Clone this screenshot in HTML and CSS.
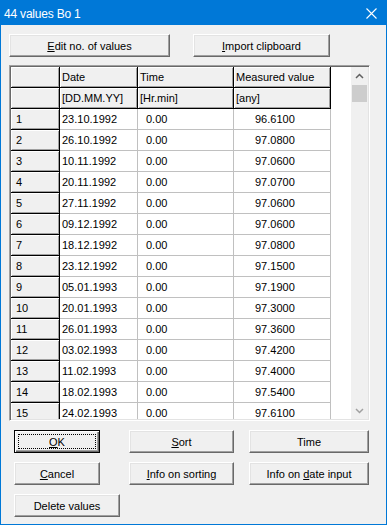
FILE: index.html
```html
<!DOCTYPE html>
<html>
<head>
<meta charset="utf-8">
<title>44 values Bo 1</title>
<link rel="stylesheet" href="styles.css">
</head>
<body>
<div class="window">
  <div class="titlebar">
    <span class="title">44 values Bo 1</span>
    <svg class="close" width="11" height="11" viewBox="0 0 11 11"><path d="M0.5 0.5 L10.5 10.5 M10.5 0.5 L0.5 10.5" stroke="#fff" stroke-width="1.1" fill="none"/></svg>
  </div>

  <div class="topbar">
    <button class="btn btn-edit"><span><u>E</u>dit no. of values</span></button>
    <button class="btn btn-import"><span><u>I</u>mport clipboard</span></button>
  </div>

  <div class="grid">
    <div class="table">
      <div class="row"><div class="cell hd"></div><div class="cell hd">Date</div><div class="cell hd">Time</div><div class="cell hd">Measured value</div></div>
      <div class="row"><div class="cell hd"></div><div class="cell hd">[DD.MM.YY]</div><div class="cell hd">[Hr.min]</div><div class="cell hd">[any]</div></div>
      <div class="row"><div class="cell hd num">1</div><div class="cell">23.10.1992</div><div class="cell t">0.00</div><div class="cell v">96.6100</div></div>
      <div class="row"><div class="cell hd num">2</div><div class="cell">26.10.1992</div><div class="cell t">0.00</div><div class="cell v">97.0800</div></div>
      <div class="row"><div class="cell hd num">3</div><div class="cell">10.11.1992</div><div class="cell t">0.00</div><div class="cell v">97.0600</div></div>
      <div class="row"><div class="cell hd num">4</div><div class="cell">20.11.1992</div><div class="cell t">0.00</div><div class="cell v">97.0700</div></div>
      <div class="row"><div class="cell hd num">5</div><div class="cell">27.11.1992</div><div class="cell t">0.00</div><div class="cell v">97.0600</div></div>
      <div class="row"><div class="cell hd num">6</div><div class="cell">09.12.1992</div><div class="cell t">0.00</div><div class="cell v">97.0600</div></div>
      <div class="row"><div class="cell hd num">7</div><div class="cell">18.12.1992</div><div class="cell t">0.00</div><div class="cell v">97.0800</div></div>
      <div class="row"><div class="cell hd num">8</div><div class="cell">23.12.1992</div><div class="cell t">0.00</div><div class="cell v">97.1500</div></div>
      <div class="row"><div class="cell hd num">9</div><div class="cell">05.01.1993</div><div class="cell t">0.00</div><div class="cell v">97.1900</div></div>
      <div class="row"><div class="cell hd num">10</div><div class="cell">20.01.1993</div><div class="cell t">0.00</div><div class="cell v">97.3000</div></div>
      <div class="row"><div class="cell hd num">11</div><div class="cell">26.01.1993</div><div class="cell t">0.00</div><div class="cell v">97.3600</div></div>
      <div class="row"><div class="cell hd num">12</div><div class="cell">03.02.1993</div><div class="cell t">0.00</div><div class="cell v">97.4200</div></div>
      <div class="row"><div class="cell hd num">13</div><div class="cell">11.02.1993</div><div class="cell t">0.00</div><div class="cell v">97.4000</div></div>
      <div class="row"><div class="cell hd num">14</div><div class="cell">18.02.1993</div><div class="cell t">0.00</div><div class="cell v">97.5400</div></div>
      <div class="row"><div class="cell hd num">15</div><div class="cell">24.02.1993</div><div class="cell t">0.00</div><div class="cell v">97.6100</div></div>
    </div>
    <div class="scrollbar">
      <div class="sb-btn"><svg width="9" height="6" viewBox="0 0 9 6"><path d="M1 5 L4.5 1.5 L8 5" stroke="#606060" stroke-width="1.5" fill="none"/></svg></div>
      <div class="sb-thumb"></div>
      <div class="sb-track"></div>
      <div class="sb-btn"><svg width="9" height="6" viewBox="0 0 9 6"><path d="M1 1 L4.5 4.5 L8 1" stroke="#a0a0a0" stroke-width="1.5" fill="none"/></svg></div>
    </div>
  </div>

  <div class="bottom">
    <button class="btn btn-default btn-s"><span class="focus"><span><u>O</u>K</span></span></button>
    <button class="btn btn-m"><span><u>S</u>ort</span></button>
    <button class="btn btn-l"><span>Time</span></button>
    <button class="btn btn-s"><span><u>C</u>ancel</span></button>
    <button class="btn btn-m"><span><u>I</u>nfo on sorting</span></button>
    <button class="btn btn-l"><span>Info on <u>d</u>ate input</span></button>
    <button class="btn btn-del"><span>Delete values</span></button>
  </div>
</div>
</body>
</html>
```

FILE: styles.css
```css
html, body {
  margin: 0;
  padding: 0;
  background: #f0f0f0;
}

.window {
  width: 387px;
  height: 525px;
  box-sizing: border-box;
  border: 1px solid #0078d7;
  background: #f0f0f0;
  font-family: "Liberation Sans", Arial, sans-serif;
  font-size: 11px;
  color: #000;
  overflow: hidden;
}

.titlebar {
  height: 24px;
  background: #0078d7;
  color: #fff;
  display: flex;
  align-items: center;
  justify-content: space-between;
  padding: 0 9px 0 3px;
}

.title {
  font-size: 12px;
  letter-spacing: -0.2px;
  margin-top: 1px;
}

.close {
  display: block;
  margin-top: 1px;
}

.btn {
  font-family: inherit;
  font-size: 11px;
  color: #000;
  background: #f0f0f0;
  height: 23px;
  box-sizing: border-box;
  border: 1px solid;
  border-color: #fff #696969 #696969 #fff;
  box-shadow: inset -1px -1px 0 #a0a0a0, inset 1px 1px 0 #e3e3e3;
  padding: 0;
  margin: 0;
  display: flex;
  align-items: center;
  justify-content: center;
  white-space: nowrap;
}

.btn u {
  text-decoration: underline;
  text-underline-offset: 1px;
}

.topbar {
  display: flex;
  gap: 23px;
  margin: 9px 0 0 8px;
}

.btn-edit { width: 161px; }
.btn-import { width: 137px; }

.grid {
  width: 361px;
  height: 356px;
  margin: 8px 0 0 8px;
  box-sizing: border-box;
  border: 1px solid;
  border-color: #a0a0a0 #fff #fff #a0a0a0;
  box-shadow: inset 1px 1px 0 #696969, inset -1px -1px 0 #e3e3e3;
  padding: 1px;
  background: #fff;
  display: flex;
  overflow: hidden;
}

.table {
  flex: 1;
  overflow: hidden;
  background: #fff;
}

.row {
  display: grid;
  grid-template-columns: 49px 78px 96px 97px;
  height: 21px;
}

.cell {
  box-sizing: border-box;
  height: 21px;
  border-right: 1px solid #c0c0c0;
  border-bottom: 1px solid #c0c0c0;
  padding-left: 2px;
  line-height: 20px;
  white-space: nowrap;
  overflow: hidden;
  background: #fff;
}

.cell.hd {
  background: #f0f0f0;
  border-right-color: #000;
  border-bottom-color: #000;
  box-shadow: inset 1px 1px 0 #fff, inset -1px -1px 0 #a0a0a0;
}

.cell.num { padding-left: 5px; }
.cell.t { padding-left: 8px; }
.cell.v { padding-left: 21px; }

.scrollbar {
  width: 17px;
  background: #f0f0f0;
  display: flex;
  flex-direction: column;
}

.sb-btn {
  height: 17px;
  display: flex;
  align-items: center;
  justify-content: center;
}

.sb-thumb {
  height: 17px;
  margin: 1px 1px 0 1px;
  background: #cdcdcd;
}

.sb-track {
  flex: 1;
}

.bottom {
  display: grid;
  grid-template-columns: 115px 120px 120px;
  row-gap: 9px;
  margin: 9px 0 0 13px;
}

.btn-s { width: 86px; }
.btn-m { width: 105px; }
.btn-l { width: 120px; }
.btn-del { width: 106px; }

.btn-default {
  border: 1px solid #000;
  box-shadow: inset 1px 1px 0 #fff, inset -1px -1px 0 #696969, inset -2px -2px 0 #a0a0a0;
  position: relative;
}

.focus {
  position: absolute;
  left: 3px;
  top: 3px;
  right: 3px;
  bottom: 3px;
  border: 1px dotted #000;
  display: flex;
  align-items: center;
  justify-content: center;
}
```
